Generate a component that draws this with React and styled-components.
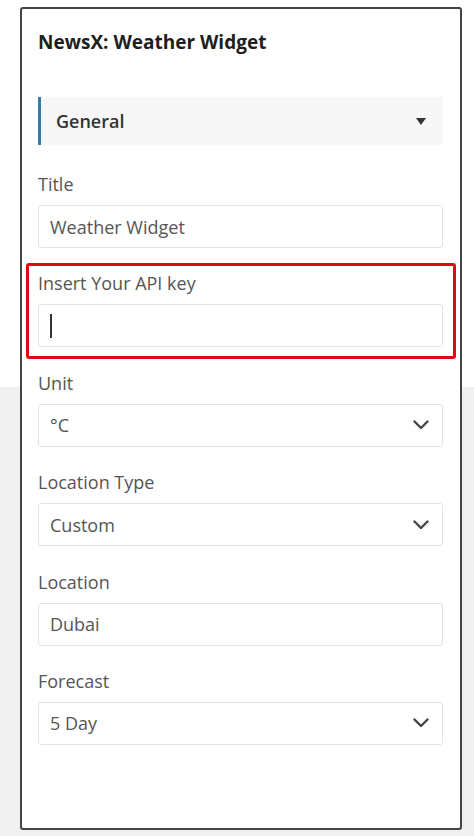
import styled, { createGlobalStyle } from 'styled-components'

//********************************************************//
/* ********************************************************* */
//Global + page
/* ********************************************************* */

const GlobalStyle = createGlobalStyle`
  html,
  body {
    margin: 0;
    padding: 0;
  }
  body {
    font-family: 'Open Sans', 'Noto Sans', Arial, sans-serif;
    background: #ffffff;
  }
`

const Page = styled.div`
  width: 474px;
  height: 836px;
  box-sizing: border-box;
  padding: 7px 0 0 20px;
  background: linear-gradient(to bottom, #ffffff 0, #ffffff 387px, #f0f0f0 387px);
  overflow: hidden;
`

const Panel = styled.div`
  width: 442px;
  height: 823px;
  box-sizing: border-box;
  border: 2px solid #444;
  border-radius: 3px;
  background: #fff;
  padding: 21px 17px 0 16px;
  display: flex;
  flex-direction: column;
`

const Heading = styled.h2`
  margin: 0 0 43px;
  font-size: 19px;
  line-height: 24px;
  font-weight: 700;
  color: #1e1e1e;
`

const SectionToggle = styled.div`
  height: 48px;
  box-sizing: border-box;
  display: flex;
  align-items: center;
  justify-content: space-between;
  padding: 0 17px 0 15px;
  background: #f7f7f7;
  border-left: 3px solid #2f7ead;
  font-size: 18px;
  font-weight: 600;
  color: #333;
  margin-bottom: 27px;
`

const Fields = styled.div`
  display: flex;
  flex-direction: column;
  gap: 23.4px;
`

const Field = styled.div`
  position: relative;
  display: flex;
  flex-direction: column;
  gap: 9px;

  ${({ $highlight }) =>
    $highlight &&
    `
    &::before {
      content: '';
      position: absolute;
      top: -8px;
      left: -12px;
      right: -13px;
      bottom: -12px;
      border: 3px solid #e30613;
      border-radius: 3px;
      pointer-events: none;
    }
  `}
`

const Label = styled.label`
  font-size: 18px;
  line-height: 24px;
  color: #555;
`

const Control = styled.div`
  height: 43px;
  box-sizing: border-box;
  display: flex;
  align-items: center;
  justify-content: space-between;
  padding: 0 13px 0 11px;
  border: 1px solid #e3e3e3;
  border-radius: 3px;
  background: #fff;
  font-size: 18px;
  color: #555;
`

const Caret = styled.span`
  display: inline-block;
  width: 1.5px;
  height: 24px;
  background: #333;
`

//********************************************************//
const Triangle = () => (
  <svg width="10" height="7" viewBox="0 0 10 7">
    <polygon points="0,0 10,0 5,7" fill="#333" />
  </svg>
)

const Chevron = () => (
  <svg width="16" height="10" viewBox="0 0 16 10">
    <polyline
      points="1.5,1.5 8,8 14.5,1.5"
      fill="none"
      stroke="#444"
      strokeWidth="2.4"
      strokeLinecap="round"
      strokeLinejoin="round"
    />
  </svg>
)

const fields = [
  { label: 'Title', value: 'Weather Widget' },
  { label: 'Insert Your API key', caret: true, highlight: true },
  { label: 'Unit', value: '°C', select: true },
  { label: 'Location Type', value: 'Custom', select: true },
  { label: 'Location', value: 'Dubai' },
  { label: 'Forecast', value: '5 Day', select: true },
]

//********************************************************//

export default function App() {
  return (
    <Page>
      <GlobalStyle />
      <Panel>
        <Heading>NewsX: Weather Widget</Heading>
        <SectionToggle>
          General
          <Triangle />
        </SectionToggle>
        <Fields>
          {fields.map((f) => (
            <Field key={f.label} $highlight={f.highlight}>
              <Label>{f.label}</Label>
              <Control>
                {f.caret ? <Caret /> : <span>{f.value}</span>}
                {f.select && <Chevron />}
              </Control>
            </Field>
          ))}
        </Fields>
      </Panel>
    </Page>
  )
}
